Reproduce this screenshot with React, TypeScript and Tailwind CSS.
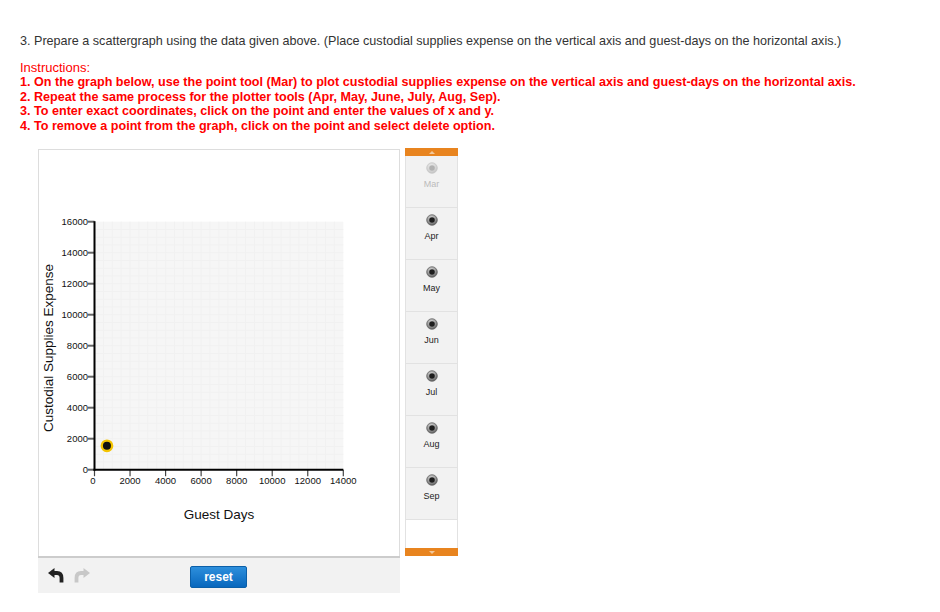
import React from 'react';

const months = ['Mar', 'Apr', 'May', 'Jun', 'Jul', 'Aug', 'Sep'];

const instructions = [
  '1. On the graph below, use the point tool (Mar) to plot custodial supplies expense on the vertical axis and guest-days on the horizontal axis.',
  '2. Repeat the same process for the plotter tools (Apr, May, June, July, Aug, Sep).',
  '3. To enter exact coordinates, click on the point and enter the values of x and y.',
  '4. To remove a point from the graph, click on the point and select delete option.',
];

// plot geometry, relative to the svg
const X0 = 55.5;
const X1 = 304.3;
const Y0 = 319.7;
const Y1 = 71.7;
const sx = (v: number) => X0 + (v / 14000) * (X1 - X0);
const sy = (v: number) => Y0 - (v / 16000) * (Y0 - Y1);

const RadioDot = ({ faded }: { faded?: boolean }) => (
  <svg width="12" height="12" viewBox="0 0 12 12" className={faded ? 'opacity-30' : ''}>
    <defs>
      <radialGradient id="rg" cx="45%" cy="35%" r="65%">
        <stop offset="0%" stopColor="#e8e8e8" />
        <stop offset="70%" stopColor="#8a8a8a" />
        <stop offset="100%" stopColor="#555" />
      </radialGradient>
    </defs>
    <circle cx="6" cy="6" r="5.3" fill="url(#rg)" stroke="#6a6a6a" strokeWidth="0.8" />
    <circle cx="6" cy="6" r="2.8" fill="#1e1e1e" />
  </svg>
);

const Chart = () => {
  const xt = [0, 2000, 4000, 6000, 8000, 10000, 12000, 14000];
  const yt = [0, 2000, 4000, 6000, 8000, 10000, 12000, 14000, 16000];
  const gx: number[] = [];
  for (let v = 500; v < 14000; v += 500) gx.push(v);
  const gy: number[] = [];
  for (let v = 500; v < 16000; v += 500) gy.push(v);
  return (
    <svg width="360" height="345" className="block" style={{ fontFamily: '"Liberation Sans", Arial, sans-serif' }}>
      <rect x={X0} y={Y1} width={X1 - X0} height={Y0 - Y1} fill="#f6f6f6" />
      {gx.map((v) => (
        <line key={'gx' + v} x1={sx(v)} x2={sx(v)} y1={Y1} y2={Y0} stroke="#f1f1f1" strokeWidth="1" />
      ))}
      {gy.map((v) => (
        <line key={'gy' + v} x1={X0} x2={X1} y1={sy(v)} y2={sy(v)} stroke="#f1f1f1" strokeWidth="1" />
      ))}
      {yt.map((v) => (
        <g key={'yt' + v}>
          <line x1={X0 - 6.5} x2={X0} y1={sy(v)} y2={sy(v)} stroke="#666" strokeWidth="2" />
          <text x={X0 - 6.5} y={sy(v) + 3.3} fontSize="9.5" textAnchor="end" fill="#111">
            {v}
          </text>
        </g>
      ))}
      {xt.map((v) => (
        <g key={'xt' + v}>
          <line x1={sx(v)} x2={sx(v)} y1={Y0} y2={Y0 + 6.5} stroke="#444" strokeWidth="1.2" />
          <text x={sx(v) - (v === 0 ? 1.5 : 0)} y={Y0 + 14.5} fontSize="9.5" textAnchor="middle" fill="#111">
            {v}
          </text>
        </g>
      ))}
      <line x1={X0} x2={X0} y1={Y1 - 0.5} y2={Y0 + 1} stroke="#000" strokeWidth="2" />
      <line x1={X0 - 1} x2={X1} y1={Y0} y2={Y0} stroke="#000" strokeWidth="2" />
      <circle cx={sx(700)} cy={sy(1540)} r="5.2" fill="#111" stroke="#f4c400" strokeWidth="2.4" />
      <text
        x="0"
        y="0"
        fontSize="13.5"
        fill="#111"
        textAnchor="middle"
        transform="translate(13.5 198) rotate(-90)"
      >
        Custodial Supplies Expense
      </text>
    </svg>
  );
};

const UndoIcon = ({ color, flip }: { color: string; flip?: boolean }) => (
  <svg width="16" height="15" viewBox="0 0 16 15" style={flip ? { transform: 'scaleX(-1)' } : undefined}>
    <path d="M0 5 L6.5 0 L6.5 10 Z" fill={color} />
    <path d="M5 5 H9 Q13.5 5 13.5 10 V14.5" fill="none" stroke={color} strokeWidth="3.8" />
  </svg>
);

export default function App() {
  return (
    <div
      className="w-[940px] h-[612px] overflow-hidden bg-white pl-[20px] pt-[34px]"
      style={{ fontFamily: '"Liberation Sans", Arial, sans-serif' }}
    >
      <p className="text-[12.6px] leading-[15px] text-[#333]">
        3. Prepare a scattergraph using the data given above. (Place custodial supplies expense on the vertical axis and
        guest-days on the horizontal axis.)
      </p>

      <div className="mt-[12px] text-[12.6px] leading-[14.4px] text-[#ff0000]">
        <p className="text-[13px]">Instructions:</p>
        {instructions.map((line) => (
          <p key={line} className="font-bold">
            {line}
          </p>
        ))}
      </div>

      <div className="ml-[18px] mt-[16px] flex items-start gap-[5px]">
        <div className="w-[362px]">
          <div className="h-[407px] border border-[#dddddd] border-b-0 bg-white">
            <Chart />
            <p className="mt-[12px] text-center text-[13.5px] leading-[16px] text-[#111]">Guest Days</p>
          </div>
          <div className="relative flex h-[37px] items-center border-t-2 border-[#cccccc] bg-[#f2f2f2] pl-[10px]">
            <div className="flex items-center gap-[10px]">
              <UndoIcon color="#222" />
              <UndoIcon color="#c8c8c8" flip />
            </div>
            <button className="absolute left-[152px] top-[8px] h-[22px] w-[57px] rounded-[2px] border border-[#0b5fa8] bg-[linear-gradient(#2d8fdc,#0867bd)] text-[12px] font-bold leading-none text-white">
              reset
            </button>
          </div>
        </div>

        <div className="-mt-px w-[53px]">
          <div className="flex h-[8px] items-center justify-center bg-[#e8841f]">
            <div className="h-0 w-0 border-x-[3px] border-b-[3px] border-x-transparent border-b-[#f2c79a]" />
          </div>
          {months.map((m, i) => (
            <div
              key={m}
              className="flex h-[52px] flex-col items-center border-x border-b border-[#e2e2e2] bg-[#f2f2f2] pt-[6px]"
            >
              <RadioDot faded={i === 0} />
              <span className={`mt-[5px] text-[9px] leading-[11px] ${i === 0 ? 'text-[#bbbbbb]' : 'text-[#222]'}`}>{m}</span>
            </div>
          ))}
          <div className="h-[28px] border-x border-[#e2e2e2] bg-white" />
          <div className="flex h-[8px] items-center justify-center bg-[#e8841f]">
            <div className="h-0 w-0 border-x-[3px] border-t-[3px] border-x-transparent border-t-[#f2c79a]" />
          </div>
        </div>
      </div>
    </div>
  );
}
